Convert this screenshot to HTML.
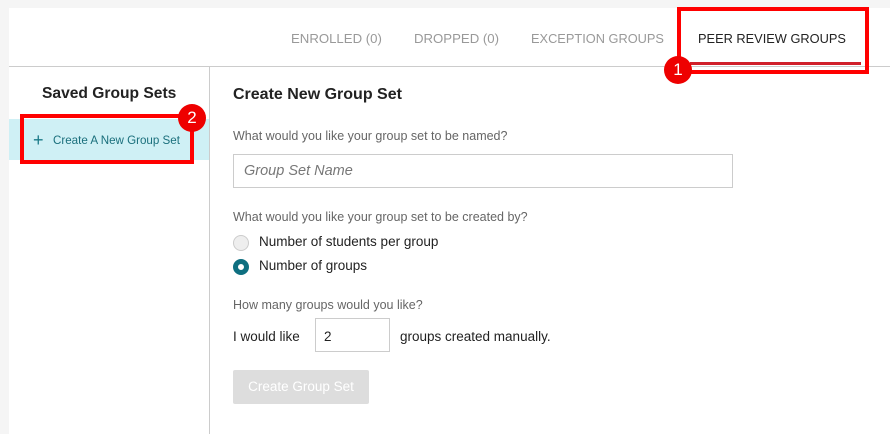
<!DOCTYPE html>
<html><head><style>
*{box-sizing:border-box;margin:0;padding:0}
body{width:890px;height:434px;background:#f5f5f5;font-family:"Liberation Sans",sans-serif;position:relative;overflow:hidden}
.panel{position:absolute;left:9px;top:8px;width:881px;height:426px;background:#fff}
.hline{position:absolute;left:9px;top:66px;width:881px;height:1px;background:#ccc}
.vline{position:absolute;left:209px;top:67px;width:1px;height:367px;background:#ccc}
.t{position:absolute;white-space:nowrap}
.tab{top:31px;font-size:13.2px;color:#999}
.lab{font-size:12.5px;color:#666}
.box{position:absolute;border:4px solid #f00}
.circ{position:absolute;width:28px;height:28px;border-radius:50%;background:#e00;color:#fff;font-size:17px;text-align:center;line-height:28px}
.inp{position:absolute;border:1px solid #ccc;background:#fff}
</style></head><body>
<div class="panel"></div>
<div class="hline"></div>
<div class="vline"></div>
<div class="t tab" style="left:291px">ENROLLED (0)</div>
<div class="t tab" style="left:414px">DROPPED (0)</div>
<div class="t tab" style="left:531px;font-size:12.8px">EXCEPTION GROUPS</div>
<div class="t tab" style="left:698px;color:#222;font-size:12.8px">PEER REVIEW GROUPS</div>
<div style="position:absolute;left:690px;top:62px;width:171px;height:3px;background:#d0202a"></div>
<div class="box" style="left:677px;top:7px;width:192px;height:67px"></div>
<div class="circ" style="left:664px;top:56px">1</div>

<div class="t" style="left:42px;top:85px;font-size:15.6px;font-weight:bold;color:#222">Saved Group Sets</div>
<div style="position:absolute;left:9px;top:119px;width:200px;height:41px;background:#cff0f5"></div>
<div class="t" style="left:33px;top:131px;font-size:18px;color:#1a7a88;line-height:18px">+</div>
<div class="t" style="left:53px;top:134px;font-size:11.6px;color:#1a6f7c">Create A New Group Set</div>
<div class="box" style="left:20px;top:114px;width:174px;height:50px"></div>
<div class="circ" style="left:178px;top:104px">2</div>

<div class="t" style="left:233px;top:86px;font-size:16px;font-weight:bold;color:#222">Create New Group Set</div>
<div class="t lab" style="left:233px;top:129px">What would you like your group set to be named?</div>
<div class="inp" style="left:233px;top:154px;width:500px;height:34px"></div>
<div class="t" style="left:244px;top:163px;font-size:14.5px;font-style:italic;color:#777">Group Set Name</div>
<div class="t lab" style="left:233px;top:210px">What would you like your group set to be created by?</div>
<div style="position:absolute;left:233px;top:235px;width:16px;height:16px;border-radius:50%;border:1px solid #ccc;background:#eee"></div>
<div class="t" style="left:259px;top:234px;font-size:13.5px;color:#222">Number of students per group</div>
<div style="position:absolute;left:233px;top:259px;width:16px;height:16px;border-radius:50%;border:5px solid #0e6f80;background:#fff"></div>
<div class="t" style="left:259px;top:258px;font-size:13.5px;color:#222">Number of groups</div>
<div class="t lab" style="left:233px;top:298px">How many groups would you like?</div>
<div class="t" style="left:233px;top:329px;font-size:13.5px;color:#222">I would like</div>
<div class="inp" style="left:315px;top:318px;width:75px;height:34px"></div>
<div class="t" style="left:324px;top:329px;font-size:13.5px;color:#222">2</div>
<div class="t" style="left:400px;top:329px;font-size:13.5px;color:#222">groups created manually.</div>
<div style="position:absolute;left:233px;top:370px;width:136px;height:34px;background:#ddd;border-radius:2px;color:#fff;font-size:13.5px;text-align:center;line-height:34px">Create Group Set</div>
</body></html>
